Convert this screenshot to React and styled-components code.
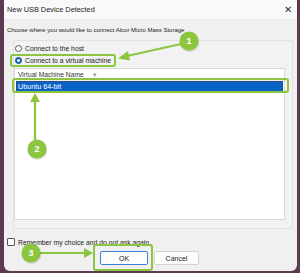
import React from 'react';
import styled, { createGlobalStyle } from 'styled-components';

const Global = createGlobalStyle`
  html, body {
    margin: 0;
    padding: 0;
    background: #5c3a52;
  }
  body {
    width: 300px;
    height: 273px;
    overflow: hidden;
    font-family: "Liberation Sans", Arial, sans-serif;
  }
`

const Frame = styled.div`
  width: 300px;
  height: 273px;
  padding: 0 3px 0 4px;
  box-sizing: border-box;
  position: relative;
`

const Window = styled.div`
  width: 293px;
  height: 271px;
  background: #f0f0f0;
  border-radius: 0 0 6px 6px;
  display: flex;
  flex-direction: column;
  overflow: hidden;
`

const TitleBar = styled.div`
  height: 20px;
  flex: none;
  display: flex;
  align-items: center;
  justify-content: space-between;
  padding: 0 5px 0 3px;
  background: #f9f9f9;
  border-bottom: 1px solid #ececec;
  box-sizing: border-box;
`

const Title = styled.span`
  font-size: 7.35px;
  color: #1b1b1b;
`

const Close = styled.span`
  font-size: 10px;
  color: #333;
  line-height: 1;
`

const Prompt = styled.div`
  margin: 5px 0 0 3px;
  height: 10px;
  font-size: 6px;
  line-height: 10px;
  color: #1b1b1b;
`

const Panel = styled.div`
  margin: 5px 4px 0 9px;
  height: 189px;
  flex: none;
  border: 1px solid #e2e2e2;
  border-radius: 2px;
  background: #f2f2f2;
  box-sizing: border-box;
  padding: 1px 7px 0 0;
  display: flex;
  flex-direction: column;
`

const RadioRow = styled.label`
  height: 12px;
  display: flex;
  align-items: center;
  gap: 3px;
  padding-left: 1px;
  font-size: 6.8px;
  color: #1b1b1b;
`

const Radio = styled.span`
  width: 7px;
  height: 7px;
  border-radius: 50%;
  box-sizing: border-box;
  border: 1px solid ${p => (p.checked ? '#0b5cad' : '#555')};
  background: ${p => (p.checked ? '#0b5cad' : '#fff')};
  display: flex;
  align-items: center;
  justify-content: center;
  &::after {
    content: '';
    width: 3px;
    height: 3px;
    border-radius: 50%;
    background: ${p => (p.checked ? '#fff' : 'transparent')};
  }
`

const List = styled.div`
  margin-top: 2px;
  height: 152px;
  background: #fff;
  border: 1px solid #d9d9d9;
  box-sizing: border-box;
  display: flex;
  flex-direction: column;
`

const Header = styled.div`
  height: 12px;
  display: flex;
  align-items: center;
  padding-left: 3px;
  gap: 8px;
  font-size: 6.7px;
  color: #333;
  border-bottom: 1px solid #f0f0f0;
  box-sizing: border-box;
`

const SortArrow = styled.span`
  font-size: 6px;
  color: #999;
`

const Row = styled.div`
  height: 9px;
  margin: 0 1px;
  display: flex;
  align-items: center;
  padding-left: 1px;
  font-size: 7.2px;
  color: ${p => (p.selected ? '#fff' : '#1b1b1b')};
  background: ${p => (p.selected ? '#0a64c8' : 'transparent')};
  border: 1px solid ${p => (p.selected ? '#2a4f7d' : 'transparent')};
`

const CheckRow = styled.label`
  margin: 8px 0 0 3px;
  height: 10px;
  display: flex;
  align-items: center;
  gap: 3px;
  font-size: 6.8px;
  color: #1b1b1b;
`

const Box = styled.span`
  width: 8px;
  height: 8px;
  border: 1px solid #555;
  border-radius: 1px;
  background: #fff;
  box-sizing: border-box;
`

const Buttons = styled.div`
  margin: 4px 0 0 96px;
  display: flex;
  gap: 6px;
`

const Button = styled.button`
  width: ${p => p.w}px;
  height: 14px;
  padding: 0;
  background: #fdfdfd;
  border: 1px solid ${p => (p.primary ? '#3b7fd0' : '#d2d2d2')};
  border-radius: 2px;
  font-family: inherit;
  font-size: 7px;
  color: #1b1b1b;
`

const Overlay = styled.svg`
  position: absolute;
  left: 0;
  top: 0;
  pointer-events: none;
`

const Badge = ({ x, y, n }) => (
  <g>
    <circle cx={x + 0.5} cy={y + 1} r="10" fill="#000" opacity="0.12" />
    <circle cx={x} cy={y} r="9.5" fill="#8cc63f" />
    <text x={x} y={y + 3} textAnchor="middle" fontSize="9" fontWeight="700" fill="#fff"
      fontFamily="Liberation Sans, sans-serif">{n}</text>
  </g>
);

const Annotations = () => (
  <Overlay width="300" height="273" viewBox="0 0 300 273">
    <g fill="none" stroke="#8cc63f" strokeWidth="2">
      <rect x="11" y="55" width="104" height="11" rx="2" />
      <rect x="13" y="79" width="275" height="13" rx="2" />
      <rect x="94" y="245" width="58" height="25" rx="2" />
    </g>
    <g stroke="#8cc63f" strokeWidth="2.2" strokeLinecap="round">
      <line x1="181" y1="44" x2="127" y2="56" />
      <line x1="35" y1="140" x2="35" y2="100" />
      <line x1="40" y1="253" x2="84" y2="253" />
    </g>
    <g fill="#8cc63f">
      <polygon points="118,58.5 128,51 130,60.5" />
      <polygon points="35,93 30,102 40,102" />
      <polygon points="93,253 84,248 84,258" />
    </g>
    <Badge x={189} y={41} n="1" />
    <Badge x={37} y={149} n="2" />
    <Badge x={31} y={253} n="3" />
  </Overlay>
);

export default function App() {
  return (
    <Frame>
      <Global />
      <Window>
        <TitleBar>
          <Title>New USB Device Detected</Title>
          <Close>✕</Close>
        </TitleBar>
        <Prompt>Choose where you would like to connect Alcor Micro Mass Storage</Prompt>
        <Panel>
          <RadioRow>
            <Radio />
            Connect to the host
          </RadioRow>
          <RadioRow>
            <Radio checked />
            Connect to a virtual machine
          </RadioRow>
          <List>
            <Header>
              Virtual Machine Name
              <SortArrow>▼</SortArrow>
            </Header>
            <Row selected>Ubuntu 64-bit</Row>
          </List>
        </Panel>
        <CheckRow>
          <Box />
          Remember my choice and do not ask again
        </CheckRow>
        <Buttons>
          <Button primary w={48}>OK</Button>
          <Button w={45}>Cancel</Button>
        </Buttons>
      </Window>
      <Annotations />
    </Frame>
  );
}
